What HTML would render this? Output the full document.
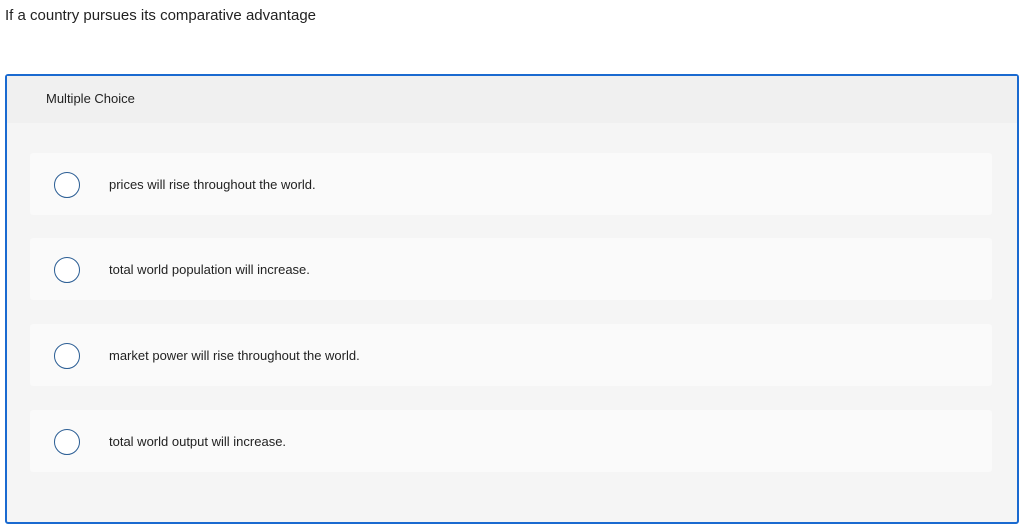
<!DOCTYPE html><html><head><style>
body{margin:0;width:1024px;height:527px;background:#fff;font-family:"Liberation Sans",sans-serif;color:#222;position:relative;overflow:hidden}
.q{position:absolute;left:5px;top:7px;font-size:15px}
.box{position:absolute;left:5px;top:74px;width:1010px;height:446px;border:2px solid #1a6ad0;border-radius:3px;background:#f5f5f5}
.hd{position:absolute;left:0;top:0;right:0;height:47px;background:#f0f0f0}
.hd span{position:absolute;left:39px;top:15px;font-size:13px}
.opt{position:absolute;left:23px;width:962px;height:62px;background:#fafafa;border-radius:3px}
.c{position:absolute;left:24px;top:19px;width:24px;height:24px;border:1.5px solid #2a5d94;border-radius:50%;background:#fff}
.t{position:absolute;left:79px;top:24px;font-size:13px}
</style></head><body>
<div class="q">If a country pursues its comparative advantage</div>
<div class="box"><div class="hd"><span>Multiple Choice</span></div>
<div class="opt" style="top:77px"><div class="c"></div><div class="t">prices will rise throughout the world.</div></div>
<div class="opt" style="top:162px"><div class="c"></div><div class="t">total world population will increase.</div></div>
<div class="opt" style="top:248px"><div class="c"></div><div class="t">market power will rise throughout the world.</div></div>
<div class="opt" style="top:334px"><div class="c"></div><div class="t">total world output will increase.</div></div>
</div></body></html>
